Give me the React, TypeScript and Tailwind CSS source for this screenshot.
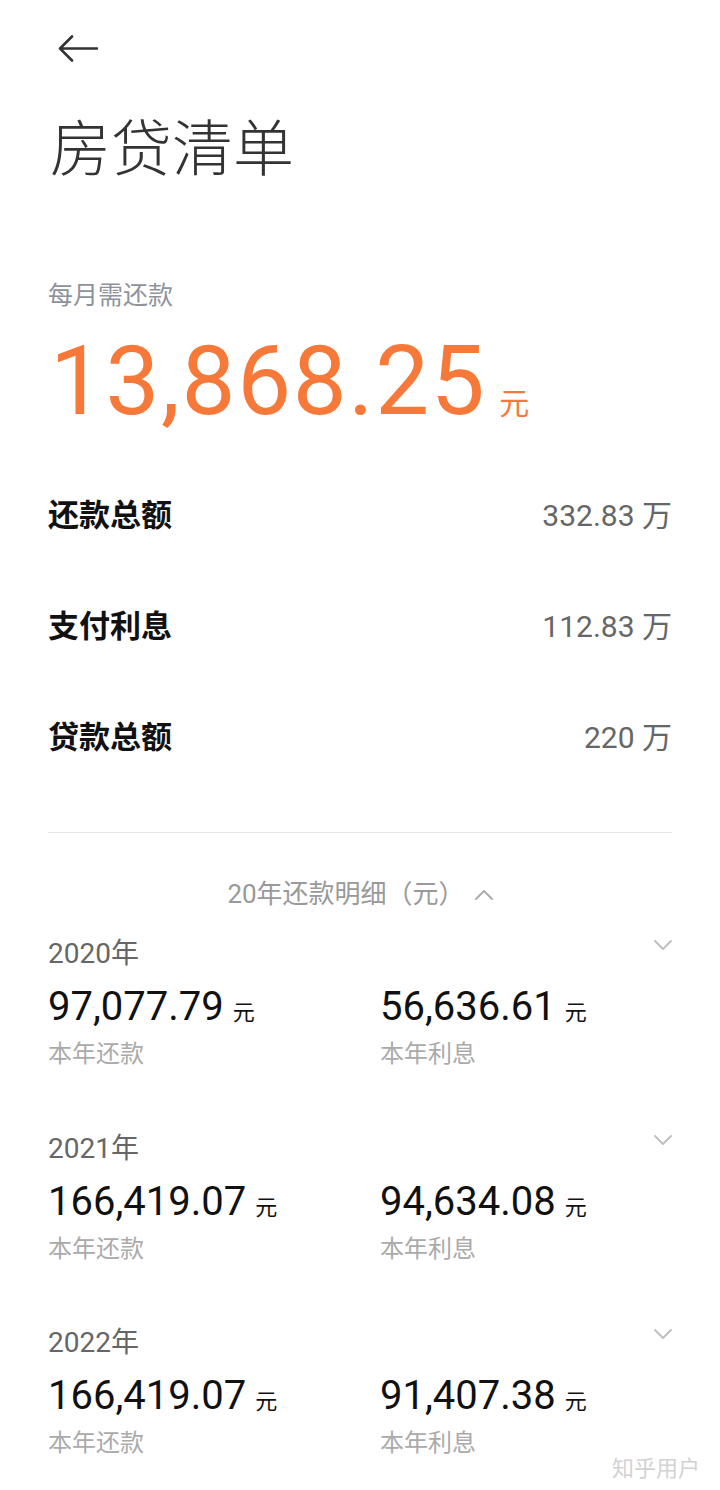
const font = "font-['Roboto','Noto_Sans_CJK_SC',sans-serif]";

type Year = { year: string; paid: string; interest: string };

const years: Year[] = [
  { year: "2020年", paid: "97,077.79", interest: "56,636.61" },
  { year: "2021年", paid: "166,419.07", interest: "94,634.08" },
  { year: "2022年", paid: "166,419.07", interest: "91,407.38" },
];

const summary = [
  { label: "还款总额", value: "332.83" },
  { label: "支付利息", value: "112.83" },
  { label: "贷款总额", value: "220" },
];

function ChevronDown() {
  return (
    <svg width="18" height="10" viewBox="0 0 18 10" fill="none">
      <path d="M1 1L9 9L17 1" stroke="#bdbdbd" strokeWidth="1.8" strokeLinecap="round" strokeLinejoin="round" />
    </svg>
  );
}

function YearBlock({ item }: { item: Year }) {
  return (
    <div className="h-[194.5px]">
      <div className="flex h-[52px] justify-between">
        <span className="self-center pt-[6px] text-[28px] leading-none text-[#666]">{item.year}</span>
        <div className="mt-[15px]">
          <ChevronDown />
        </div>
      </div>
      <div className="grid h-[52px] grid-cols-[332px_1fr] pt-[10px]">
        <div className="flex items-baseline text-[#111]">
          <span className="text-[40px] leading-none">{item.paid}</span>
          <span className="ml-[9px] text-[22px] leading-none">元</span>
        </div>
        <div className="flex items-baseline text-[#111]">
          <span className="text-[40px] leading-none">{item.interest}</span>
          <span className="ml-[9px] text-[22px] leading-none">元</span>
        </div>
      </div>
      <div className="grid h-[48px] grid-cols-[332px_1fr] items-center pt-[2px] text-[24px] leading-none text-[#aaa]">
        <span>本年还款</span>
        <span>本年利息</span>
      </div>
    </div>
  );
}

export default function App() {
  return (
    <div className={`relative h-[1490px] w-[720px] overflow-hidden bg-white ${font}`}>
      {/* top bar */}
      <div className="flex h-[96px] items-center pl-[58px]">
        <svg width="40" height="27" viewBox="0 0 40 27" fill="none">
          <path d="M39 13.5H2M14 1.5L2 13.5L14 25.5" stroke="#333" strokeWidth="2.6" strokeLinecap="round" strokeLinejoin="round" />
        </svg>
      </div>

      <div className="px-[48px]">
        <h1 className="mt-[24px] h-[60px] pl-[2px] text-[61px] font-light leading-none text-[#333]">房贷清单</h1>

        <p className="mt-[103px] text-[25px] leading-none text-[#8e929b]">每月需还款</p>

        <div className="mt-[25px] flex h-[96px] items-baseline pl-[2px] text-[#f7793a]">
          <span className="text-[96px] leading-none tracking-[1.6px]">13,868.25</span>
          <span className="ml-[13px] text-[30px] leading-none">元</span>
        </div>

        <div className="mt-[31px]">
          {summary.map((row) => (
            <div key={row.label} className="flex h-[111px] items-center justify-between">
              <span className="text-[31px] font-bold leading-none text-[#111]">{row.label}</span>
              <span className="text-[30px] leading-none text-[#666]">
                {row.value} 万
              </span>
            </div>
          ))}
        </div>

        <div className="mt-[39px] h-px bg-[#e6e6e6]" />

        <div className="mt-[30px] flex h-[62px] items-center justify-center gap-[10px] text-[#999]">
          <span className="text-[26px] leading-none">20年还款明细（元）</span>
          <svg width="18" height="11" viewBox="0 0 18 11" fill="none">
            <path d="M1 10L9 2L17 10" stroke="#aaa" strokeWidth="1.8" strokeLinecap="round" strokeLinejoin="round" />
          </svg>
        </div>

        {years.map((y) => (
          <YearBlock key={y.year} item={y} />
        ))}
      </div>

      <span className="absolute bottom-[10px] right-[20px] text-[22px] leading-none text-[#d2d2d2]">知乎用户</span>
    </div>
  );
}
